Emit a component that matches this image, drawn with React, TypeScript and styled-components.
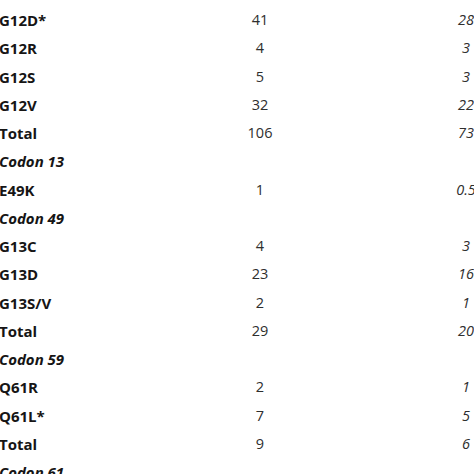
import styled, { createGlobalStyle } from "styled-components";

const GlobalStyle = createGlobalStyle`
  html, body {
    margin: 0;
    padding: 0;
    background: #ffffff;
    overflow: hidden;
  }
  body {
    font-family: "Open Sans", "Liberation Sans", sans-serif;
  }
`;

const Table = styled.div`
  width: 610px;
  padding-top: 6px;
  margin-left: -1px;
`;

const Row = styled.div`
  display: grid;
  grid-template-columns: 200px 122px 290px;
  height: 28.27px;
  line-height: 28.27px;
  font-size: 15px;
`;

const Label = styled.div<{ $section?: boolean }>`
  font-weight: 700;
  font-style: ${(p) => (p.$section ? "italic" : "normal")};
  color: #161515;
  white-space: nowrap;
`;

const Count = styled.div`
  text-align: center;
  color: #2e2e2e;
  font-weight: 400;
  font-size: 14.5px;
`;

const Percent = styled.div`
  text-align: center;
  color: #2e2e2e;
  font-style: italic;
  font-weight: 400;
  font-size: 14.5px;
`;

type Item = { label: string; section?: boolean; n?: string; pct?: string };

const rows: Item[] = [
  { label: "G12D*", n: "41", pct: "28" },
  { label: "G12R", n: "4", pct: "3" },
  { label: "G12S", n: "5", pct: "3" },
  { label: "G12V", n: "32", pct: "22" },
  { label: "Total", n: "106", pct: "73" },
  { label: "Codon 13", section: true },
  { label: "E49K", n: "1", pct: "0.5" },
  { label: "Codon 49", section: true },
  { label: "G13C", n: "4", pct: "3" },
  { label: "G13D", n: "23", pct: "16" },
  { label: "G13S/V", n: "2", pct: "1" },
  { label: "Total", n: "29", pct: "20" },
  { label: "Codon 59", section: true },
  { label: "Q61R", n: "2", pct: "1" },
  { label: "Q61L*", n: "7", pct: "5" },
  { label: "Total", n: "9", pct: "6" },
  { label: "Codon 61", section: true },
];

export default function App() {
  return (
    <>
      <GlobalStyle />
      <Table>
        {rows.map((r, i) => (
          <Row key={i}>
            <Label $section={r.section}>{r.label}</Label>
            <Count>{r.n}</Count>
            <Percent>{r.pct}</Percent>
          </Row>
        ))}
      </Table>
    </>
  );
}
